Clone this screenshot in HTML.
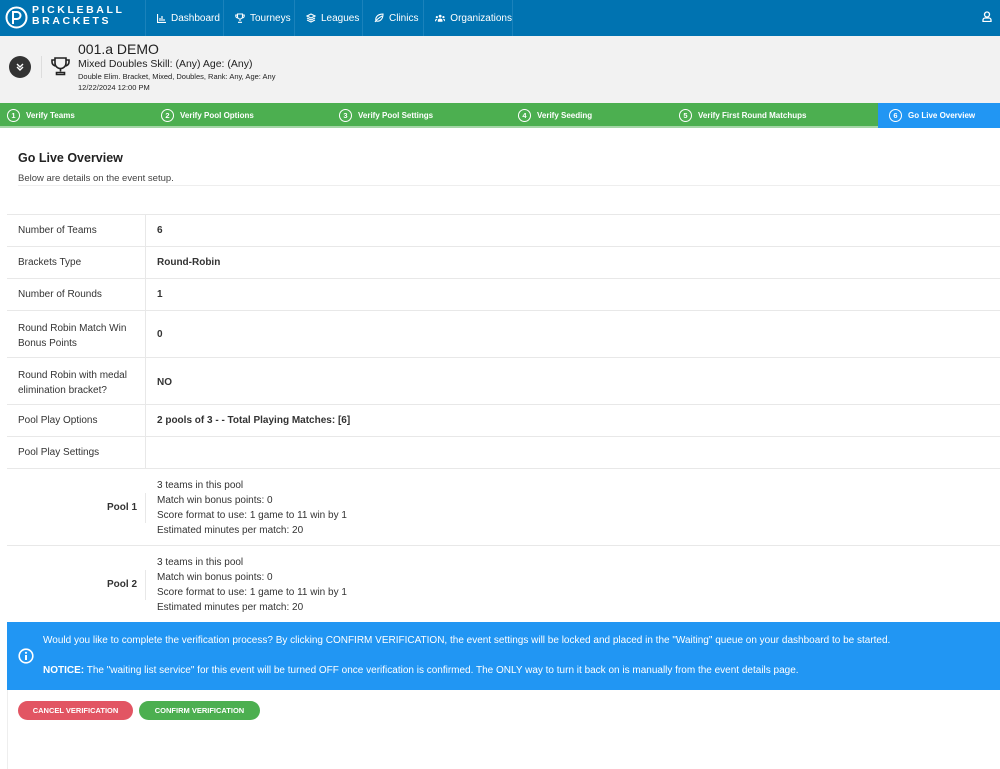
<!DOCTYPE html>
<html><head><meta charset="utf-8"><style>
*{margin:0;padding:0;box-sizing:border-box}
body{width:1000px;height:769px;overflow:hidden;background:#fff;font-family:"Liberation Sans",sans-serif;color:#333;position:relative}
.nav{position:absolute;left:0;top:0;width:1000px;height:36px;background:#0073b1}
.nav .it{position:absolute;top:0;height:36px;color:#fff;font-size:10px;border-left:1px solid #1a82bb;padding-left:11px;white-space:nowrap;display:flex;align-items:center;gap:5px}
.hdr{position:absolute;left:0;top:36px;width:1000px;height:67px;background:#f2f2f2}
.steps{position:absolute;left:0;top:103px;width:1000px;height:25px;background:#4caf50;border-bottom:2px solid #a5d6a7}
.st{position:absolute;top:0;height:25px;color:#fff;font-size:8px;font-weight:bold;display:flex;align-items:center;white-space:nowrap}
.st i{display:inline-block;width:13px;height:13px;border:1.3px solid #fff;border-radius:50%;text-align:center;line-height:11px;font-style:normal;font-size:7.5px;margin-right:6px}
.row{position:absolute;left:7px;width:993px;border-top:1px solid #e8e8e8;font-size:10px}
.row .l{position:absolute;left:11px}
.row .v{position:absolute;left:150px;font-weight:bold}
.row .sep{position:absolute;left:138px;top:0;bottom:0;border-left:1px solid #e8e8e8}
.pool{font-size:10px;line-height:15px;position:absolute;left:157px}
.btn{position:absolute;top:701px;height:19px;border-radius:10px;color:#fff;font-size:7.5px;font-weight:bold;text-align:center;line-height:19px}
</style></head><body>
<div class="nav">
 <svg style="position:absolute;left:5px;top:6px" width="23" height="23" viewBox="0 0 23 23"><circle cx="11.5" cy="11.5" r="10" fill="none" stroke="#fff" stroke-width="2"/><path d="M8 18V6h4a3.5 3.5 0 0 1 0 7H8" fill="none" stroke="#fff" stroke-width="2"/></svg>
 <div style="position:absolute;left:32px;top:5px;color:#fff;font-weight:bold;font-size:10.5px;letter-spacing:2.6px;line-height:11px">PICKLEBALL<br>BRACKETS</div>
 <div class="it" style="left:145px;width:78px"><svg width="9" height="9" viewBox="0 0 9 9"><path d="M.5 0v8.5H9M3 7V4M5 7V2M7 7V5" stroke="#fff" stroke-width="1.2" fill="none"/></svg>Dashboard</div>
 <div class="it" style="left:223px;width:71px"><svg width="10" height="10" viewBox="0 0 10 10"><path d="M2.5 1h5v2.5a2.5 2.5 0 0 1-5 0zM2.5 2H.8v1a2 2 0 0 0 2 2M7.5 2h1.7v1a2 2 0 0 1-2 2M5 6v2M3 9.3h4" stroke="#fff" stroke-width="1.1" fill="none"/></svg>Tourneys</div>
 <div class="it" style="left:294px;width:68px"><svg width="10" height="10" viewBox="0 0 10 10"><path d="M5 1L1 3l4 2 4-2zM1 5l4 2 4-2M1 7l4 2 4-2" stroke="#fff" stroke-width="1.1" fill="none"/></svg>Leagues</div>
 <div class="it" style="left:362px;width:61px"><svg width="10" height="10" viewBox="0 0 10 10"><path d="M1 9C3 6 5 5 8 3M2 8C1 4 4 1 9 1 9 6 6 9 2 8z" stroke="#fff" stroke-width="1.1" fill="none"/></svg>Clinics</div>
 <div class="it" style="left:423px;width:90px;border-right:1px solid #1a82bb"><svg width="11" height="9" viewBox="0 0 11 9"><circle cx="5.5" cy="2" r="1.5" fill="#fff"/><circle cx="2" cy="3" r="1.2" fill="#fff"/><circle cx="9" cy="3" r="1.2" fill="#fff"/><path d="M3 8V6.5a2.5 2 0 0 1 5 0V8zM0 8V6.5a1.5 1.5 0 0 1 2.5-1M11 8V6.5a1.5 1.5 0 0 0-2.5-1" fill="#fff"/></svg>Organizations</div>
 <svg style="position:absolute;left:982px;top:11px" width="10" height="11" viewBox="0 0 10 11"><circle cx="5" cy="3.5" r="2.5" fill="none" stroke="#fff" stroke-width="1.3"/><path d="M1 10.5V9a2 2 0 0 1 2-2h4a2 2 0 0 1 2 2v1.5z" fill="none" stroke="#fff" stroke-width="1.3"/></svg>
</div>
<div class="hdr">
 <div style="position:absolute;left:9px;top:20px;width:22px;height:22px;border-radius:50%;background:#333"></div>
 <svg style="position:absolute;left:15px;top:26px" width="10" height="10" viewBox="0 0 10 10"><path d="M2 2l3 3 3-3M2 5l3 3 3-3" stroke="#fff" stroke-width="1.4" fill="none"/></svg>
 <div style="position:absolute;left:41px;top:20px;height:22px;border-left:1px solid #ddd"></div>
 <svg style="position:absolute;left:50px;top:20px" width="21" height="20" viewBox="0 0 21 20"><path d="M5 2h11v5a5.5 5.5 0 0 1-11 0z M5 4H2v2a4 4 0 0 0 4 4 M16 4h3v2a4 4 0 0 1-4 4 M10.5 12.5v3 M6.5 18.5h8v-2h-8z" fill="none" stroke="#222" stroke-width="1.6"/></svg>
 <div style="position:absolute;left:78px;top:5px;font-size:14px;color:#222">001.a DEMO</div>
 <div style="position:absolute;left:78px;top:22px;font-size:10.5px;color:#222">Mixed Doubles Skill: (Any) Age: (Any)</div>
 <div style="position:absolute;left:78px;top:36px;font-size:7.5px;color:#222">Double Elim. Bracket, Mixed, Doubles, Rank: Any, Age: Any</div>
 <div style="position:absolute;left:78px;top:47px;font-size:7.5px;color:#222">12/22/2024 12:00 PM</div>
</div>
<div class="steps">
 <div class="st" style="left:7px"><i>1</i>Verify Teams</div>
 <div class="st" style="left:161px"><i>2</i>Verify Pool Options</div>
 <div class="st" style="left:339px"><i>3</i>Verify Pool Settings</div>
 <div class="st" style="left:518px"><i>4</i>Verify Seeding</div>
 <div class="st" style="left:679px"><i>5</i>Verify First Round Matchups</div>
 <div class="st" style="left:878px;width:122px;background:#2196f3;padding-left:11px"><i>6</i>Go Live Overview</div>
</div>
<div style="position:absolute;left:18px;top:151px;font-size:12.5px;font-weight:bold;color:#222">Go Live Overview</div>
<div style="position:absolute;left:18px;top:173px;font-size:9.5px;color:#444">Below are details on the event setup.</div>
<div style="position:absolute;left:18px;top:185px;width:982px;border-top:1px solid #eee"></div>

<div class="row" style="top:214px;height:32px"><div class="sep"></div><span class="l" style="top:10px">Number of Teams</span><span class="v" style="top:10px">6</span></div>
<div class="row" style="top:246px;height:32px"><div class="sep"></div><span class="l" style="top:10px">Brackets Type</span><span class="v" style="top:10px">Round-Robin</span></div>
<div class="row" style="top:278px;height:32px"><div class="sep"></div><span class="l" style="top:10px">Number of Rounds</span><span class="v" style="top:10px">1</span></div>
<div class="row" style="top:310px;height:47px"><div class="sep"></div><span class="l" style="top:10px;line-height:15px">Round Robin Match Win<br>Bonus Points</span><span class="v" style="top:18px">0</span></div>
<div class="row" style="top:357px;height:47px"><div class="sep"></div><span class="l" style="top:10px;line-height:15px">Round Robin with medal<br>elimination bracket?</span><span class="v" style="top:19px">NO</span></div>
<div class="row" style="top:404px;height:32px"><div class="sep"></div><span class="l" style="top:10px">Pool Play Options</span><span class="v" style="top:10px">2 pools of 3 - - Total Playing Matches: [6]</span></div>
<div class="row" style="top:436px;height:32px"><div class="sep"></div><span class="l" style="top:10px">Pool Play Settings</span></div>
<div class="row" style="top:468px;height:77px"><span style="position:absolute;left:100px;top:33px;font-weight:bold">Pool 1</span><div style="position:absolute;left:138px;top:24px;height:30px;border-left:1px solid #e8e8e8"></div></div>
<div class="pool" style="top:478px">3 teams in this pool<br>Match win bonus points: 0<br>Score format to use: 1 game to 11 win by 1<br>Estimated minutes per match: 20</div>
<div class="row" style="top:545px;height:76px"><span style="position:absolute;left:100px;top:33px;font-weight:bold">Pool 2</span><div style="position:absolute;left:138px;top:24px;height:30px;border-left:1px solid #e8e8e8"></div></div>
<div class="pool" style="top:555px">3 teams in this pool<br>Match win bonus points: 0<br>Score format to use: 1 game to 11 win by 1<br>Estimated minutes per match: 20</div>

<div style="position:absolute;left:7px;top:622px;width:993px;height:68px;background:#2196f3;color:#fff;font-size:10px">
 <svg style="position:absolute;left:11px;top:26px" width="16" height="16" viewBox="0 0 16 16"><circle cx="8" cy="8" r="6.8" fill="none" stroke="#fff" stroke-width="1.6"/><circle cx="8" cy="4.8" r="1.1" fill="#fff"/><rect x="7" y="7" width="2" height="5" fill="#fff"/></svg>
 <div style="position:absolute;left:36px;top:13px">Would you like to complete the verification process? By clicking CONFIRM VERIFICATION, the event settings will be locked and placed in the "Waiting" queue on your dashboard to be started.</div>
 <div style="position:absolute;left:36px;top:43px"><b>NOTICE:</b> The "waiting list service" for this event will be turned OFF once verification is confirmed. The ONLY way to turn it back on is manually from the event details page.</div>
</div>
<div class="btn" style="left:18px;width:115px;background:#e25563">CANCEL VERIFICATION</div>
<div class="btn" style="left:139px;width:121px;background:#4caf50">CONFIRM VERIFICATION</div>
<div style="position:absolute;left:7px;top:690px;bottom:0;border-left:1px solid #eee"></div>
</body></html>
